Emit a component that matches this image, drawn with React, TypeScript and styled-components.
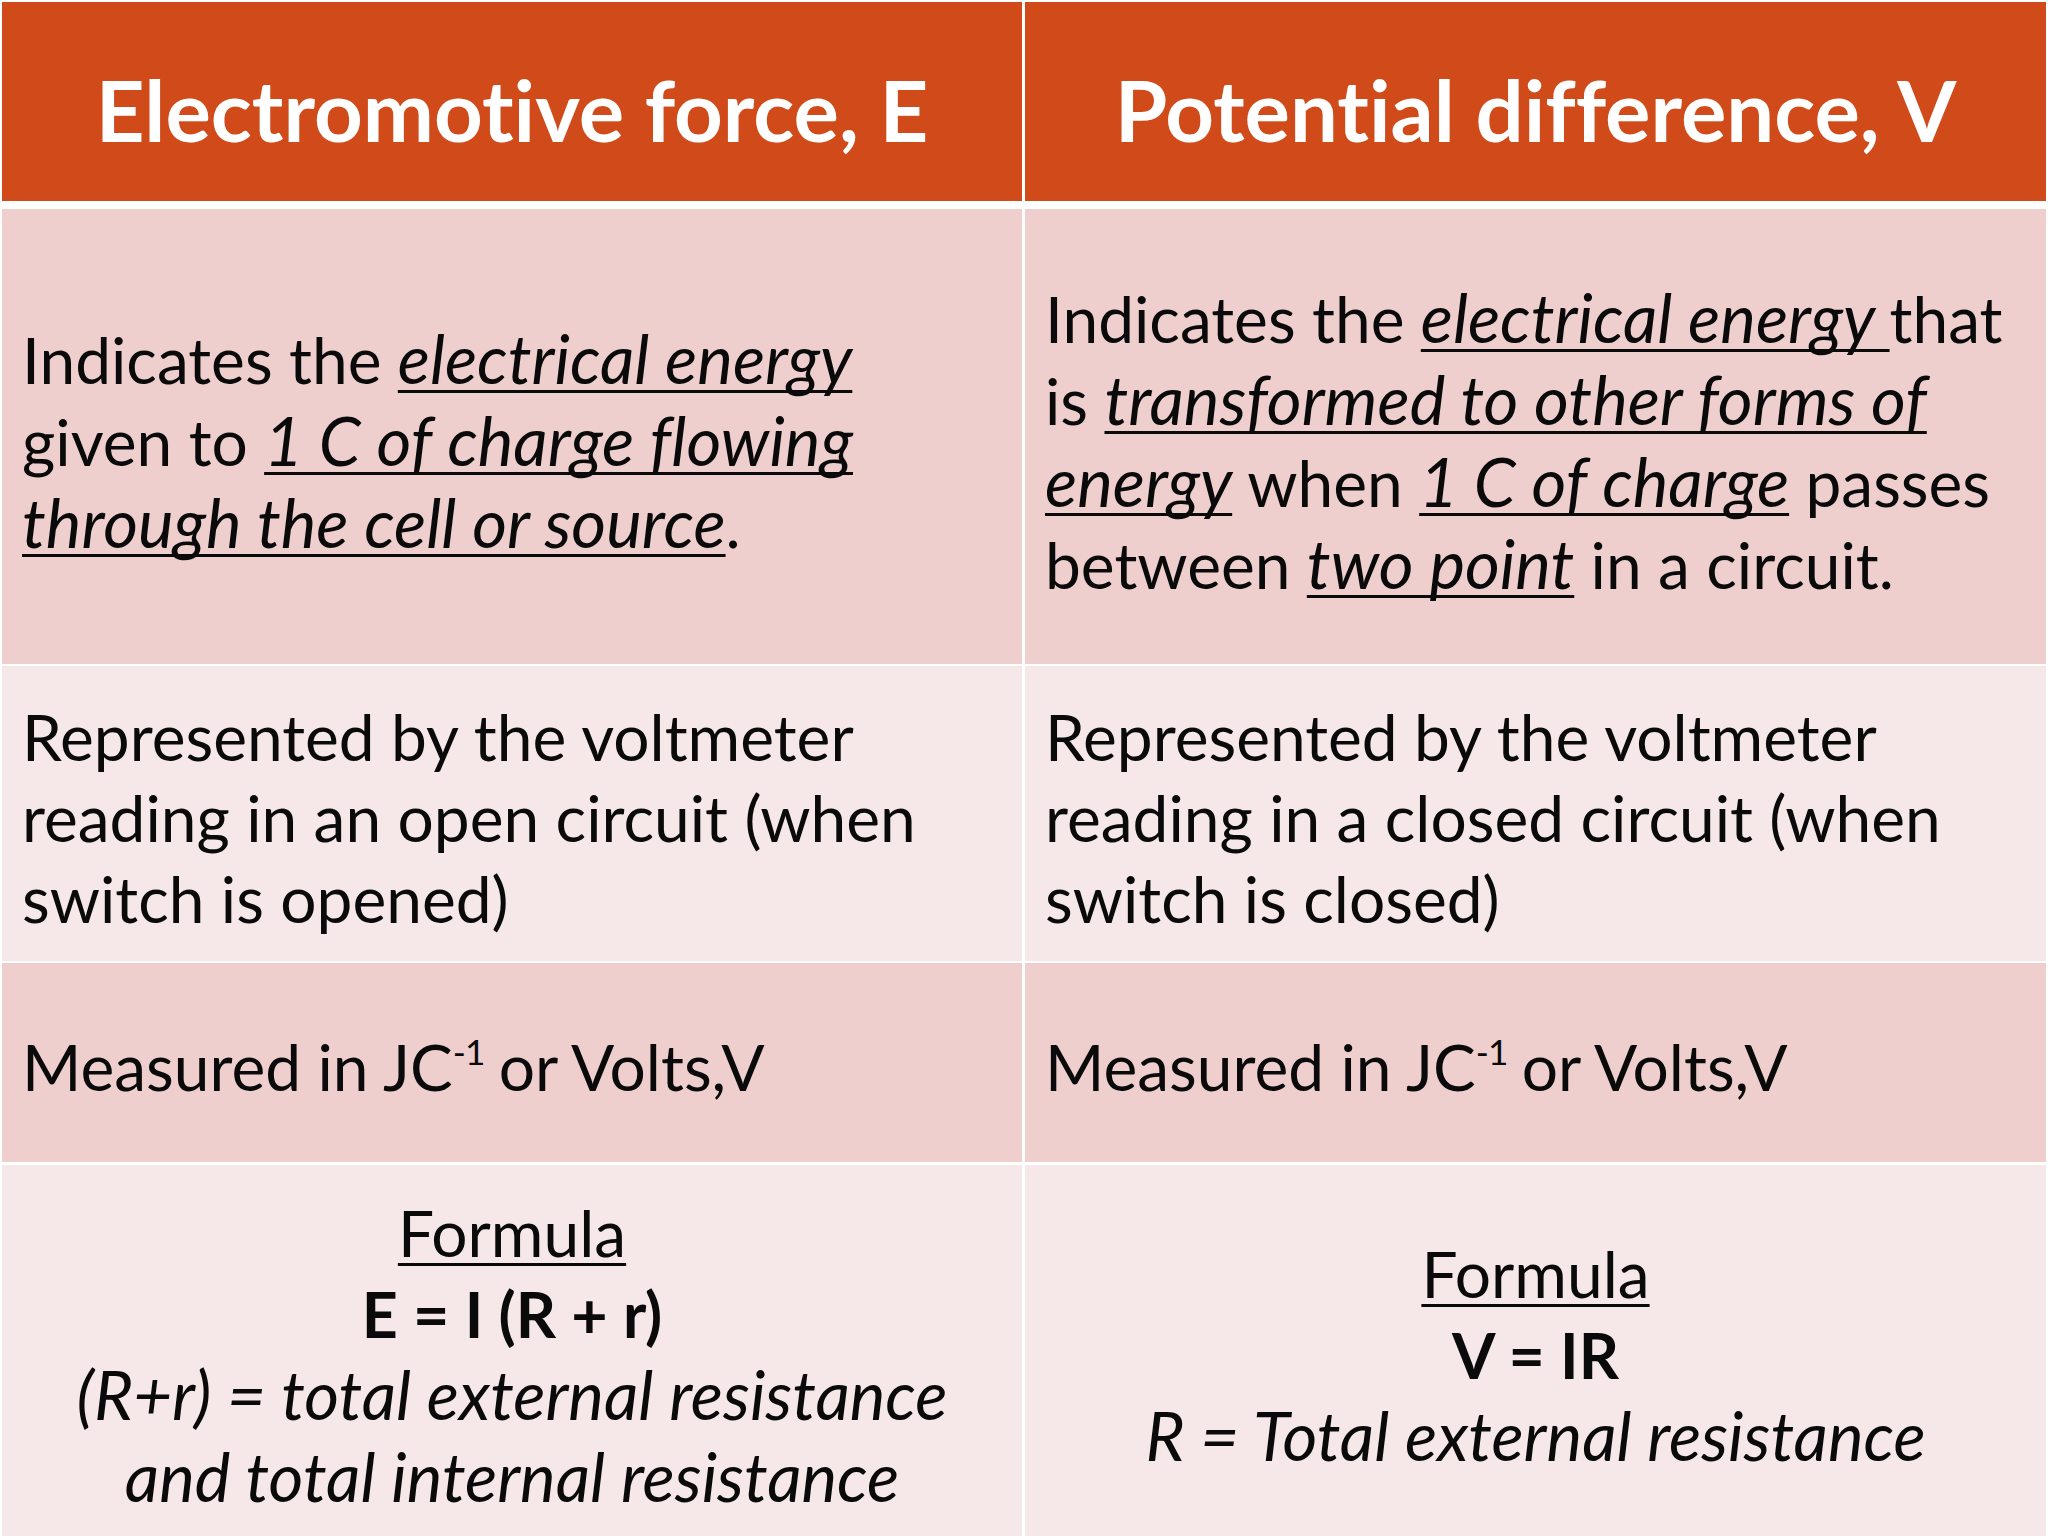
import React from "react";
import styled, { createGlobalStyle } from "styled-components";

const GlobalStyle = createGlobalStyle`
  html, body {
    margin: 0;
    padding: 0;
    background: #ffffff;
    height: 100%;
  }
  #root {
    height: 100%;
  }
`;

const Table = styled.div`
  box-sizing: border-box;
  width: 2048px;
  height: 1536px;
  padding: 2px 2px 0 2px;
  display: flex;
  flex-direction: column;
  gap: 2px;
  background: #ffffff;
  font-family: "Lato", "Open Sans", sans-serif;
  font-variant-ligatures: none;
  color: #0a0a0a;
  overflow: hidden;
`;

const Row = styled.div<{ $h?: number; $after?: number }>`
  display: grid;
  grid-template-columns: 1020px 1021px;
  column-gap: 3px;
  ${(p) => (p.$h ? `height: ${p.$h}px; flex: none;` : `flex: 1;`)}
  ${(p) => (p.$after ? `margin-bottom: ${p.$after}px;` : "")}
`;

const HeadCell = styled.div`
  background: #d04a1a;
  color: #ffffff;
  display: flex;
  align-items: center;
  justify-content: center;
  padding-top: 14px;
  box-sizing: border-box;
  font-weight: 700;
  font-size: 85px;
  line-height: 1.2;
  white-space: nowrap;
`;

const Cell = styled.div<{ $tone: "dark" | "light"; $center?: boolean }>`
  background: ${(p) => (p.$tone === "dark" ? "#eecfce" : "#f6e8e8")};
  display: flex;
  flex-direction: column;
  justify-content: center;
  align-items: ${(p) => (p.$center ? "center" : "flex-start")};
  text-align: ${(p) => (p.$center ? "center" : "left")};
  box-sizing: border-box;
  padding: 8px 0 0 ${(p) => (p.$center ? "0" : "20px")};
  font-size: 64px;
  line-height: 81px;
`;

const Line = styled.span`
  display: block;
  white-space: nowrap;
`;

const Em = styled.span<{ $u?: boolean }>`
  font-style: italic;
  font-size: 1.05em;
  ${(p) =>
    p.$u
      ? `text-decoration: underline;
         text-decoration-thickness: 3px;
         text-underline-offset: 6px;
         text-decoration-skip-ink: none;`
      : ""}
`;

const Under = styled.span`
  text-decoration: underline;
  text-decoration-thickness: 3px;
  text-underline-offset: 6px;
  text-decoration-skip-ink: none;
`;

const Bold = styled.span`
  font-weight: 700;
  font-size: 0.98em;
`;

const Sup = styled.sup`
  font-size: 0.55em;
  line-height: 0;
  vertical-align: 0.75em;
  margin-left: 0;
  margin-right: -2px;
  letter-spacing: -1px;
`;

export default function App() {
  return (
    <>
      <GlobalStyle />
      <Table>
        <Row $h={199} $after={6}>
          <HeadCell>Electromotive force, E</HeadCell>
          <HeadCell>Potential difference, V</HeadCell>
        </Row>

        <Row $h={455}>
          <Cell $tone="dark">
            <Line>
              Indicates the <Em $u>electrical energy</Em>
            </Line>
            <Line>
              given to <Em $u>1 C of charge flowing</Em>
            </Line>
            <Line>
              <Em $u>through the cell or source</Em>.
            </Line>
          </Cell>
          <Cell $tone="dark">
            <Line>
              Indicates the <Em $u>electrical energy </Em>that
            </Line>
            <Line>
              is <Em $u>transformed to other forms of</Em>
            </Line>
            <Line>
              <Em $u>energy</Em> when <Em $u>1 C of charge</Em> passes
            </Line>
            <Line>
              between <Em $u>two point</Em> in a circuit.
            </Line>
          </Cell>
        </Row>

        <Row $h={295}>
          <Cell $tone="light">
            <Line>Represented by the voltmeter</Line>
            <Line>reading in an open circuit (when</Line>
            <Line>switch is opened)</Line>
          </Cell>
          <Cell $tone="light">
            <Line>Represented by the voltmeter</Line>
            <Line>reading in a closed circuit (when</Line>
            <Line>switch is closed)</Line>
          </Cell>
        </Row>

        <Row $h={199} $after={1}>
          <Cell $tone="dark">
            <Line>
              Measured in JC<Sup>-1</Sup> or Volts,V
            </Line>
          </Cell>
          <Cell $tone="dark">
            <Line>
              Measured in JC<Sup>-1</Sup> or Volts,V
            </Line>
          </Cell>
        </Row>

        <Row>
          <Cell $tone="light" $center>
            <Line>
              <Under>Formula</Under>
            </Line>
            <Line>
              <Bold>E = I (R + r)</Bold>
            </Line>
            <Line>
              <Em>(R+r) = total external resistance</Em>
            </Line>
            <Line>
              <Em>and total internal resistance</Em>
            </Line>
          </Cell>
          <Cell $tone="light" $center>
            <Line>
              <Under>Formula</Under>
            </Line>
            <Line>
              <Bold>V = IR</Bold>
            </Line>
            <Line>
              <Em>R = Total external resistance</Em>
            </Line>
          </Cell>
        </Row>
      </Table>
    </>
  );
}
